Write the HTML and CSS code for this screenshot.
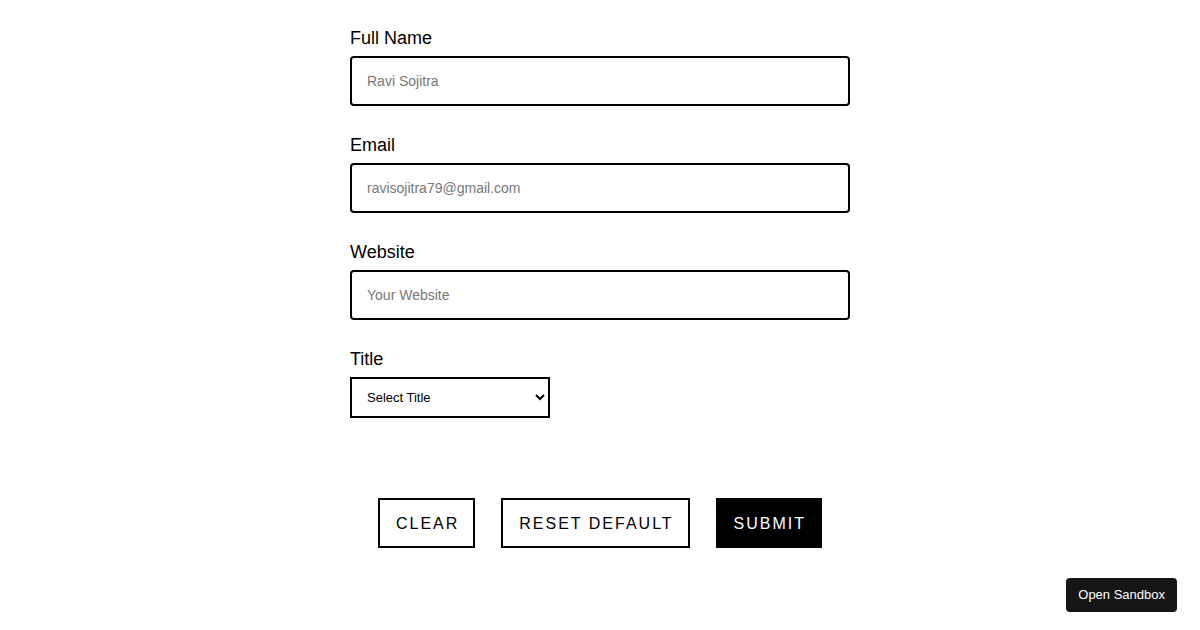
FILE: index.html
```html
<!DOCTYPE html>
<html lang="en">
<head>
  <meta charset="UTF-8">
  <meta name="viewport" content="width=device-width, initial-scale=1.0">
  <title>Contact Form</title>
  <link rel="stylesheet" href="styles.css">
</head>
<body>
  <!-- Form -->
  <form class="form">
    <div class="field">
      <label for="name">Full Name</label>
      <input type="text" id="name" placeholder="Ravi Sojitra">
    </div>

    <div class="field">
      <label for="email">Email</label>
      <input type="email" id="email" placeholder="ravisojitra79@gmail.com">
    </div>

    <div class="field">
      <label for="website">Website</label>
      <input type="text" id="website" placeholder="Your Website">
    </div>

    <div class="field">
      <label for="title">Title</label>
      <select id="title">
        <option>Select Title</option>
        <option>Mr.</option>
        <option>Mrs.</option>
        <option>Ms.</option>
      </select>
    </div>

    <!-- Actions -->
    <div class="actions">
      <button type="button" class="btn">Clear</button>
      <button type="button" class="btn">Reset Default</button>
      <button type="submit" class="btn btn-dark">Submit</button>
    </div>
  </form>

  <a class="sandbox" href="#">Open Sandbox</a>
</body>
</html>
```

FILE: styles.css
```css
/* General Styles */
body {
  margin: 0;
  padding: 0;
  font-family: 'Liberation Sans', Arial, sans-serif;
  background: #fff;
  color: #000;
}

/* Form */
.form {
  width: 500px;
  margin: 0 auto;
  padding-top: 27px;
}

.field {
  margin-bottom: 28px;
}

.field label {
  display: block;
  font-size: 18px;
  line-height: 23px;
  margin-bottom: 6px;
}

.field input {
  display: block;
  box-sizing: border-box;
  width: 100%;
  height: 50px;
  padding: 0 15px;
  border: 2px solid #000;
  border-radius: 4px;
  font-family: inherit;
  font-size: 14px;
  color: #000;
  outline: none;
}

.field input::placeholder {
  color: #777;
}

.field select {
  display: block;
  box-sizing: border-box;
  width: 200px;
  height: 41px;
  padding: 0 11px;
  border: 2px solid #000;
  border-radius: 0;
  background: #fff;
  font-family: inherit;
  font-size: 13px;
  color: #000;
}

/* Actions */
.actions {
  display: flex;
  justify-content: center;
  gap: 26px;
  margin-top: 80px;
}

.btn {
  box-sizing: border-box;
  height: 50px;
  padding: 2px 14px 0 16px;
  border: 2px solid #000;
  background: #fff;
  color: #000;
  font-family: inherit;
  font-size: 16px;
  letter-spacing: 2px;
  text-transform: uppercase;
  cursor: pointer;
}

.btn-dark {
  background: #000;
  color: #fff;
}

/* Sandbox link */
.sandbox {
  position: fixed;
  right: 23px;
  bottom: 18px;
  padding: 9px 12px;
  background: #151515;
  border-radius: 4px;
  color: #fff;
  font-size: 13px;
  line-height: 16px;
  text-decoration: none;
}
```
